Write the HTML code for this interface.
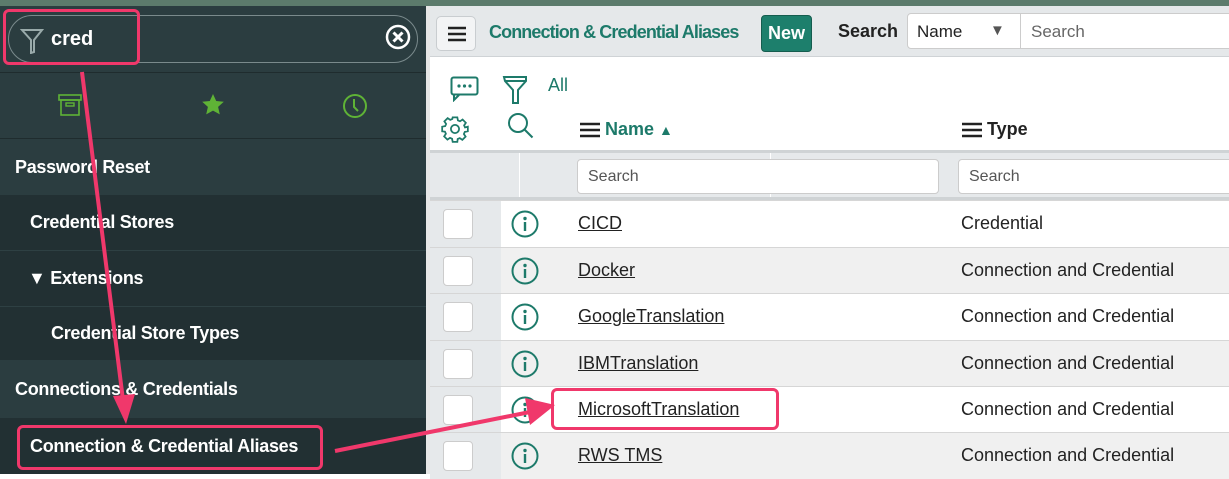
<!DOCTYPE html><html><head><style>
*{box-sizing:border-box}
body{margin:0;width:1229px;height:474px;overflow:hidden;font-family:"Liberation Sans",sans-serif;position:relative;background:#fff}
.a{position:absolute}
.sb{left:0;top:6px;width:426px;height:468px;background:#2b3d40}
.si{position:absolute;left:0;width:426px;color:#fff;font-size:18px;font-weight:bold;display:flex;align-items:center;letter-spacing:-0.3px}
.rw{position:absolute;left:430px;width:799px;height:47px;border-top:1px solid #d6d6d6;font-size:18px;color:#222}
.rw .c{position:absolute;left:0;top:0;width:71px;height:100%;background:#e6e9eb}
.rw .cb{position:absolute;left:13px;top:8px;width:30px;height:30px;background:#fff;border:1px solid #ccc;border-radius:4px}
.rw .n{position:absolute;left:148px;top:12px;text-decoration:underline}
.rw .t{position:absolute;left:531px;top:12px}
.rw svg{position:absolute;left:81px;top:9px}
</style></head><body>
<div class="a" style="left:0;top:0;width:1229px;height:6px;background:#5c7b6c"></div>
<div class="a sb"></div>
<div class="a" style="left:426px;top:6px;width:4px;height:468px;background:#e6e6e6"></div>
<div class="a" style="left:8px;top:15px;width:410px;height:48px;border:1px solid #7a8a8c;border-radius:24px"></div>
<svg class="a" style="left:20px;top:28px" width="24" height="26" viewBox="0 0 24 26"><path d="M2 2h20l-8 10v12l-3 1V12z" fill="none" stroke="#9aa" stroke-width="2"/></svg>
<div class="a" style="left:51px;top:28px;color:#fff;font-size:20px;font-weight:bold">cred</div>
<svg class="a" style="left:385px;top:24px" width="26" height="26" viewBox="0 0 26 26"><circle cx="13" cy="13" r="11" fill="none" stroke="#fff" stroke-width="2.5"/><path d="M8.5 8.5l9 9M17.5 8.5l-9 9" stroke="#fff" stroke-width="3"/></svg>
<div class="a" style="left:0;top:72px;width:426px;height:1px;background:#1f2c2e"></div>
<svg class="a" style="left:58px;top:94px" width="24" height="22"><rect x="1" y="1" width="22" height="5" fill="none" stroke="#5fb336" stroke-width="1.6"/><rect x="3" y="6" width="18" height="15" fill="none" stroke="#5fb336" stroke-width="1.6"/><rect x="8" y="9" width="8" height="3" fill="none" stroke="#5fb336" stroke-width="1.4"/></svg>
<svg class="a" style="left:200px;top:93px" width="26" height="24" viewBox="0 0 24 24"><path d="M12 1l3.2 7 7.6.8-5.7 5.1 1.7 7.5L12 17.6 5.2 21.4l1.7-7.5L1.2 8.8 8.8 8z" fill="#5fb336"/></svg>
<svg class="a" style="left:342px;top:93px" width="26" height="26"><circle cx="13" cy="13" r="11" fill="none" stroke="#5fb336" stroke-width="2"/><path d="M12 6v8l4 4" fill="none" stroke="#5fb336" stroke-width="2"/></svg>
<div class="a" style="left:0;top:138px;width:426px;height:1px;background:#1f2c2e"></div>
<div class="si" style="top:140px;height:55px;padding-left:15px">Password Reset</div>
<div class="si" style="top:195px;height:55px;padding-left:30px;background:#223033">Credential Stores</div>
<div class="si" style="top:250px;height:56px;padding-left:28px;background:#223033;border-top:1px solid #2e4043">▼&nbsp;Extensions</div>
<div class="si" style="top:306px;height:54px;padding-left:51px;background:#223033;border-top:1px solid #2e4043">Credential Store Types</div>
<div class="si" style="top:360px;height:58px;padding-left:15px">Connections &amp; Credentials</div>
<div class="si" style="top:418px;height:56px;padding-left:30px;background:#223033">Connection &amp; Credential Aliases</div>
<div class="a" style="left:430px;top:6px;width:799px;height:51px;background:#e5e8ea;border-bottom:1px solid #cfd3d6"></div>
<div class="a" style="left:436px;top:16px;width:40px;height:35px;background:#f3f4f5;border:1px solid #c9cdd0;border-radius:5px"></div>
<svg class="a" style="left:448px;top:26px" width="18" height="16"><path d="M0 2h18M0 8h18M0 14h18" stroke="#222" stroke-width="2.6"/></svg>
<div class="a" style="left:489px;top:22px;color:#1d7a6a;font-size:18px;font-weight:bold;letter-spacing:-0.9px">Connection &amp; Credential Aliases</div>
<div class="a" style="left:761px;top:15px;width:51px;height:37px;background:#1d7f6c;border:1px solid #155d4f;border-radius:4px;color:#fff;font-size:18px;font-weight:bold;text-align:center;line-height:35px">New</div>
<div class="a" style="left:838px;top:21px;font-size:18px;font-weight:bold;color:#222">Search</div>
<div class="a" style="left:907px;top:13px;width:330px;height:36px;background:#fff;border:1px solid #ccc;border-radius:4px"></div>
<div class="a" style="left:1020px;top:14px;width:1px;height:35px;background:#ccc"></div>
<div class="a" style="left:917px;top:22px;font-size:17px;color:#222">Name</div>
<div class="a" style="left:990px;top:22px;font-size:15px;color:#555">▼</div>
<div class="a" style="left:1031px;top:22px;font-size:17px;color:#666">Search</div>
<svg class="a" style="left:450px;top:76px" width="30" height="26"><rect x="1.5" y="1.5" width="26" height="17" rx="2" fill="none" stroke="#1d7a6a" stroke-width="2"/><path d="M4 18v6l5-5" fill="none" stroke="#1d7a6a" stroke-width="2"/><circle cx="9" cy="10" r="1.6" fill="#1d7a6a"/><circle cx="14.5" cy="10" r="1.6" fill="#1d7a6a"/><circle cx="20" cy="10" r="1.6" fill="#1d7a6a"/></svg>
<svg class="a" style="left:502px;top:75px" width="26" height="30"><path d="M2 2h22v4l-8 9v13h-5V15L3 6z" fill="none" stroke="#1d7a6a" stroke-width="2"/><path d="M3 6h20" stroke="#1d7a6a" stroke-width="2"/></svg>
<div class="a" style="left:548px;top:75px;font-size:18px;color:#1d7a6a">All</div>
<svg class="a" style="left:441px;top:115px" width="28" height="28" viewBox="0 0 24 24"><path d="M10 2h4l.5 2.6 1.8.8 2.2-1.5 2.8 2.8-1.5 2.2.8 1.8L23 10v4l-2.6.5-.8 1.8 1.5 2.2-2.8 2.8-2.2-1.5-1.8.8L14 23h-4l-.5-2.6-1.8-.8-2.2 1.5-2.8-2.8 1.5-2.2-.8-1.8L1 14v-4l2.6-.5.8-1.8-1.5-2.2 2.8-2.8 2.2 1.5 1.8-.8z" fill="none" stroke="#1d7a6a" stroke-width="1.5"/><circle cx="12" cy="12" r="3.5" fill="none" stroke="#1d7a6a" stroke-width="1.5"/></svg>
<svg class="a" style="left:507px;top:112px" width="30" height="28"><circle cx="11" cy="11" r="9" fill="none" stroke="#1d7a6a" stroke-width="2"/><path d="M17.5 17.5l8 8" stroke="#1d7a6a" stroke-width="2"/></svg>
<svg class="a" style="left:580px;top:122px" width="20" height="16"><path d="M0 2h20M0 8h20M0 14h20" stroke="#222" stroke-width="2.6"/></svg>
<div class="a" style="left:605px;top:119px;font-size:18px;font-weight:bold;color:#1d7a6a">Name <span style="font-size:14px">▲</span></div>
<svg class="a" style="left:962px;top:122px" width="20" height="16"><path d="M0 2h20M0 8h20M0 14h20" stroke="#222" stroke-width="2.6"/></svg>
<div class="a" style="left:987px;top:119px;font-size:18px;font-weight:bold;color:#222">Type</div>
<div class="a" style="left:430px;top:150px;width:799px;height:50px;background:#e6e9eb;border-top:3px solid #cfd3d5;border-bottom:3px solid #cfd3d5"></div>
<div class="a" style="left:519px;top:153px;width:1px;height:44px;background:#fff"></div>
<div class="a" style="left:770px;top:153px;width:1px;height:44px;background:#fff"></div>
<div class="a" style="left:577px;top:159px;width:362px;height:35px;background:#fff;border:1px solid #ccc;border-radius:4px;padding:8px 10px;font-size:16px;color:#555">Search</div>
<div class="a" style="left:958px;top:159px;width:280px;height:35px;background:#fff;border:1px solid #ccc;border-radius:4px;padding:8px 10px;font-size:16px;color:#555">Search</div>
<div class="rw" style="top:200px;background:#fff"><div class="c"></div><div class="cb"></div><svg width="28" height="28"><circle cx="14" cy="14" r="12.5" fill="none" stroke="#1d7a6a" stroke-width="2"/><circle cx="14" cy="8.5" r="1.7" fill="#1d7a6a"/><path d="M14 12v9" stroke="#1d7a6a" stroke-width="2.4"/></svg><span class="n">CICD</span><span class="t">Credential</span></div>
<div class="rw" style="top:247px;background:#f0f0f0"><div class="c"></div><div class="cb"></div><svg width="28" height="28"><circle cx="14" cy="14" r="12.5" fill="none" stroke="#1d7a6a" stroke-width="2"/><circle cx="14" cy="8.5" r="1.7" fill="#1d7a6a"/><path d="M14 12v9" stroke="#1d7a6a" stroke-width="2.4"/></svg><span class="n">Docker</span><span class="t">Connection and Credential</span></div>
<div class="rw" style="top:293px;background:#fff"><div class="c"></div><div class="cb"></div><svg width="28" height="28"><circle cx="14" cy="14" r="12.5" fill="none" stroke="#1d7a6a" stroke-width="2"/><circle cx="14" cy="8.5" r="1.7" fill="#1d7a6a"/><path d="M14 12v9" stroke="#1d7a6a" stroke-width="2.4"/></svg><span class="n">GoogleTranslation</span><span class="t">Connection and Credential</span></div>
<div class="rw" style="top:340px;background:#f0f0f0"><div class="c"></div><div class="cb"></div><svg width="28" height="28"><circle cx="14" cy="14" r="12.5" fill="none" stroke="#1d7a6a" stroke-width="2"/><circle cx="14" cy="8.5" r="1.7" fill="#1d7a6a"/><path d="M14 12v9" stroke="#1d7a6a" stroke-width="2.4"/></svg><span class="n">IBMTranslation</span><span class="t">Connection and Credential</span></div>
<div class="rw" style="top:386px;background:#fff"><div class="c"></div><div class="cb"></div><svg width="28" height="28"><circle cx="14" cy="14" r="12.5" fill="none" stroke="#1d7a6a" stroke-width="2"/><circle cx="14" cy="8.5" r="1.7" fill="#1d7a6a"/><path d="M14 12v9" stroke="#1d7a6a" stroke-width="2.4"/></svg><span class="n">MicrosoftTranslation</span><span class="t">Connection and Credential</span></div>
<div class="rw" style="top:432px;background:#f0f0f0"><div class="c"></div><div class="cb"></div><svg width="28" height="28"><circle cx="14" cy="14" r="12.5" fill="none" stroke="#1d7a6a" stroke-width="2"/><circle cx="14" cy="8.5" r="1.7" fill="#1d7a6a"/><path d="M14 12v9" stroke="#1d7a6a" stroke-width="2.4"/></svg><span class="n">RWS TMS</span><span class="t">Connection and Credential</span></div>
<div class="a" style="left:3px;top:9px;width:137px;height:56px;border:3px solid #f0386b;border-radius:6px"></div>
<div class="a" style="left:17px;top:425px;width:306px;height:45px;border:3px solid #f0386b;border-radius:6px"></div>
<div class="a" style="left:551px;top:388px;width:228px;height:42px;border:3px solid #f0386b;border-radius:6px"></div>
<svg class="a" style="left:0;top:0" width="1229" height="474"><path d="M82 72L123 400" stroke="#f0386b" stroke-width="4"/><path d="M113 396l13 28 9-30z" fill="#f0386b"/><path d="M335 451L530 412" stroke="#f0386b" stroke-width="4"/><path d="M525 398l30 7-25 20z" fill="#f0386b"/></svg>
</body></html>
